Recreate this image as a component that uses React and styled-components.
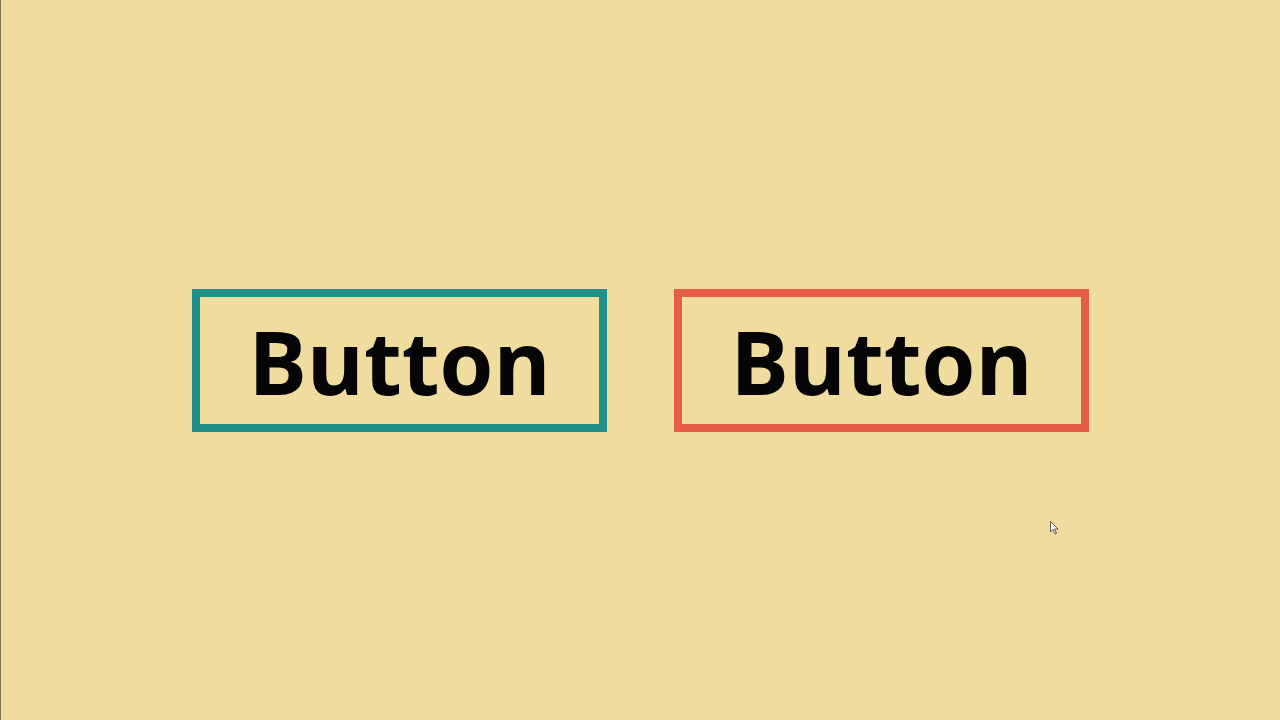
import React from 'react';
import styled, { createGlobalStyle } from 'styled-components';

const GlobalStyle = createGlobalStyle`
  html, body {
    margin: 0;
    padding: 0;
    background-color: #f0dc9e;
    font-family: 'Open Sans', 'Liberation Sans', sans-serif;
  }
`

const Page = styled.main`
  position: relative;
  box-sizing: border-box;
  width: 1280px;
  height: 720px;
  display: flex;
  justify-content: center;
  align-items: center;
  gap: 67px;
  border-left: 1px solid #7a7259;
`

const OutlineButton = styled.button`
  box-sizing: border-box;
  width: 415px;
  height: 143px;
  display: flex;
  justify-content: center;
  align-items: center;
  background: transparent;
  border: 8px solid ${props => props.color};
  padding: 3px 0 0;
  font-family: 'Open Sans', 'Liberation Sans', sans-serif;
  font-weight: 700;
  font-size: 87px;
  line-height: 1;
  color: #050505;
  cursor: pointer;
`

const Cursor = styled.svg`
  position: absolute;
  left: 1049px;
  top: 521px;
`

const App = () => {
  return (
    <>
      <GlobalStyle />
      <Page>
        <OutlineButton color="#1e9089">Button</OutlineButton>
        <OutlineButton color="#e65c45">Button</OutlineButton>
        <Cursor width="10" height="15" viewBox="0 0 10 15">
          <path d="M0.5 0.5 L0.5 11 L3 8.5 L5 13 L6.5 12.3 L4.6 8 L8 8 Z" fill="#fff" stroke="#333" strokeWidth="0.8" />
        </Cursor>
      </Page>
    </>
  )
}

export default App;
